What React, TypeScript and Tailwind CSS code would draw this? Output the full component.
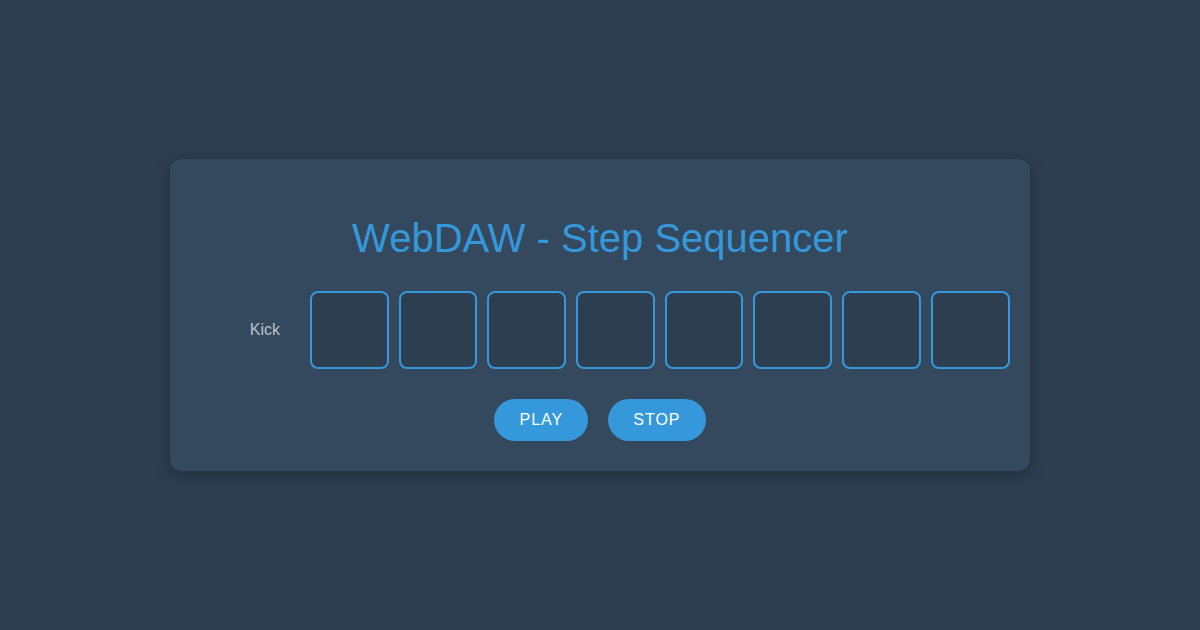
import React from 'react';

const STEPS = 8;

export default function App() {
  return (
    <div
      className="w-[1200px] h-[630px] bg-[#2c3e50] flex items-center justify-center"
      style={{ fontFamily: '"Liberation Sans", Arial, sans-serif' }}
    >
      <div className="w-[860px] h-[312px] bg-[#34495e] rounded-[12px] shadow-[0_4px_16px_rgba(0,0,0,0.25)] flex flex-col pt-[56px] pb-[30px]">
        <h1 className="text-[40px] leading-[46px] text-[#3498db] text-center font-normal">
          WebDAW - Step Sequencer
        </h1>

        <div className="flex items-center mt-[29.5px] pl-[30px]">
          <div className="w-[110px] pr-[30px] text-right text-[16px] text-[#bdc3c7]">Kick</div>
          <div className="flex gap-[10px]">
            {Array.from({ length: STEPS }).map((_, i) => (
              <div
                key={i}
                className="w-[78.7px] h-[78.7px] rounded-[8px] border-2 border-[#3498db] bg-[#2c3e50]"
              />
            ))}
          </div>
        </div>

        <div className="flex justify-center gap-[20px] mt-[29.5px]">
          <button className="px-[25px] py-[12px] rounded-full bg-[#3498db] text-white text-[16px] leading-[18px] tracking-[1px]">
            PLAY
          </button>
          <button className="px-[25px] py-[12px] rounded-full bg-[#3498db] text-white text-[16px] leading-[18px] tracking-[1px]">
            STOP
          </button>
        </div>
      </div>
    </div>
  );
}
